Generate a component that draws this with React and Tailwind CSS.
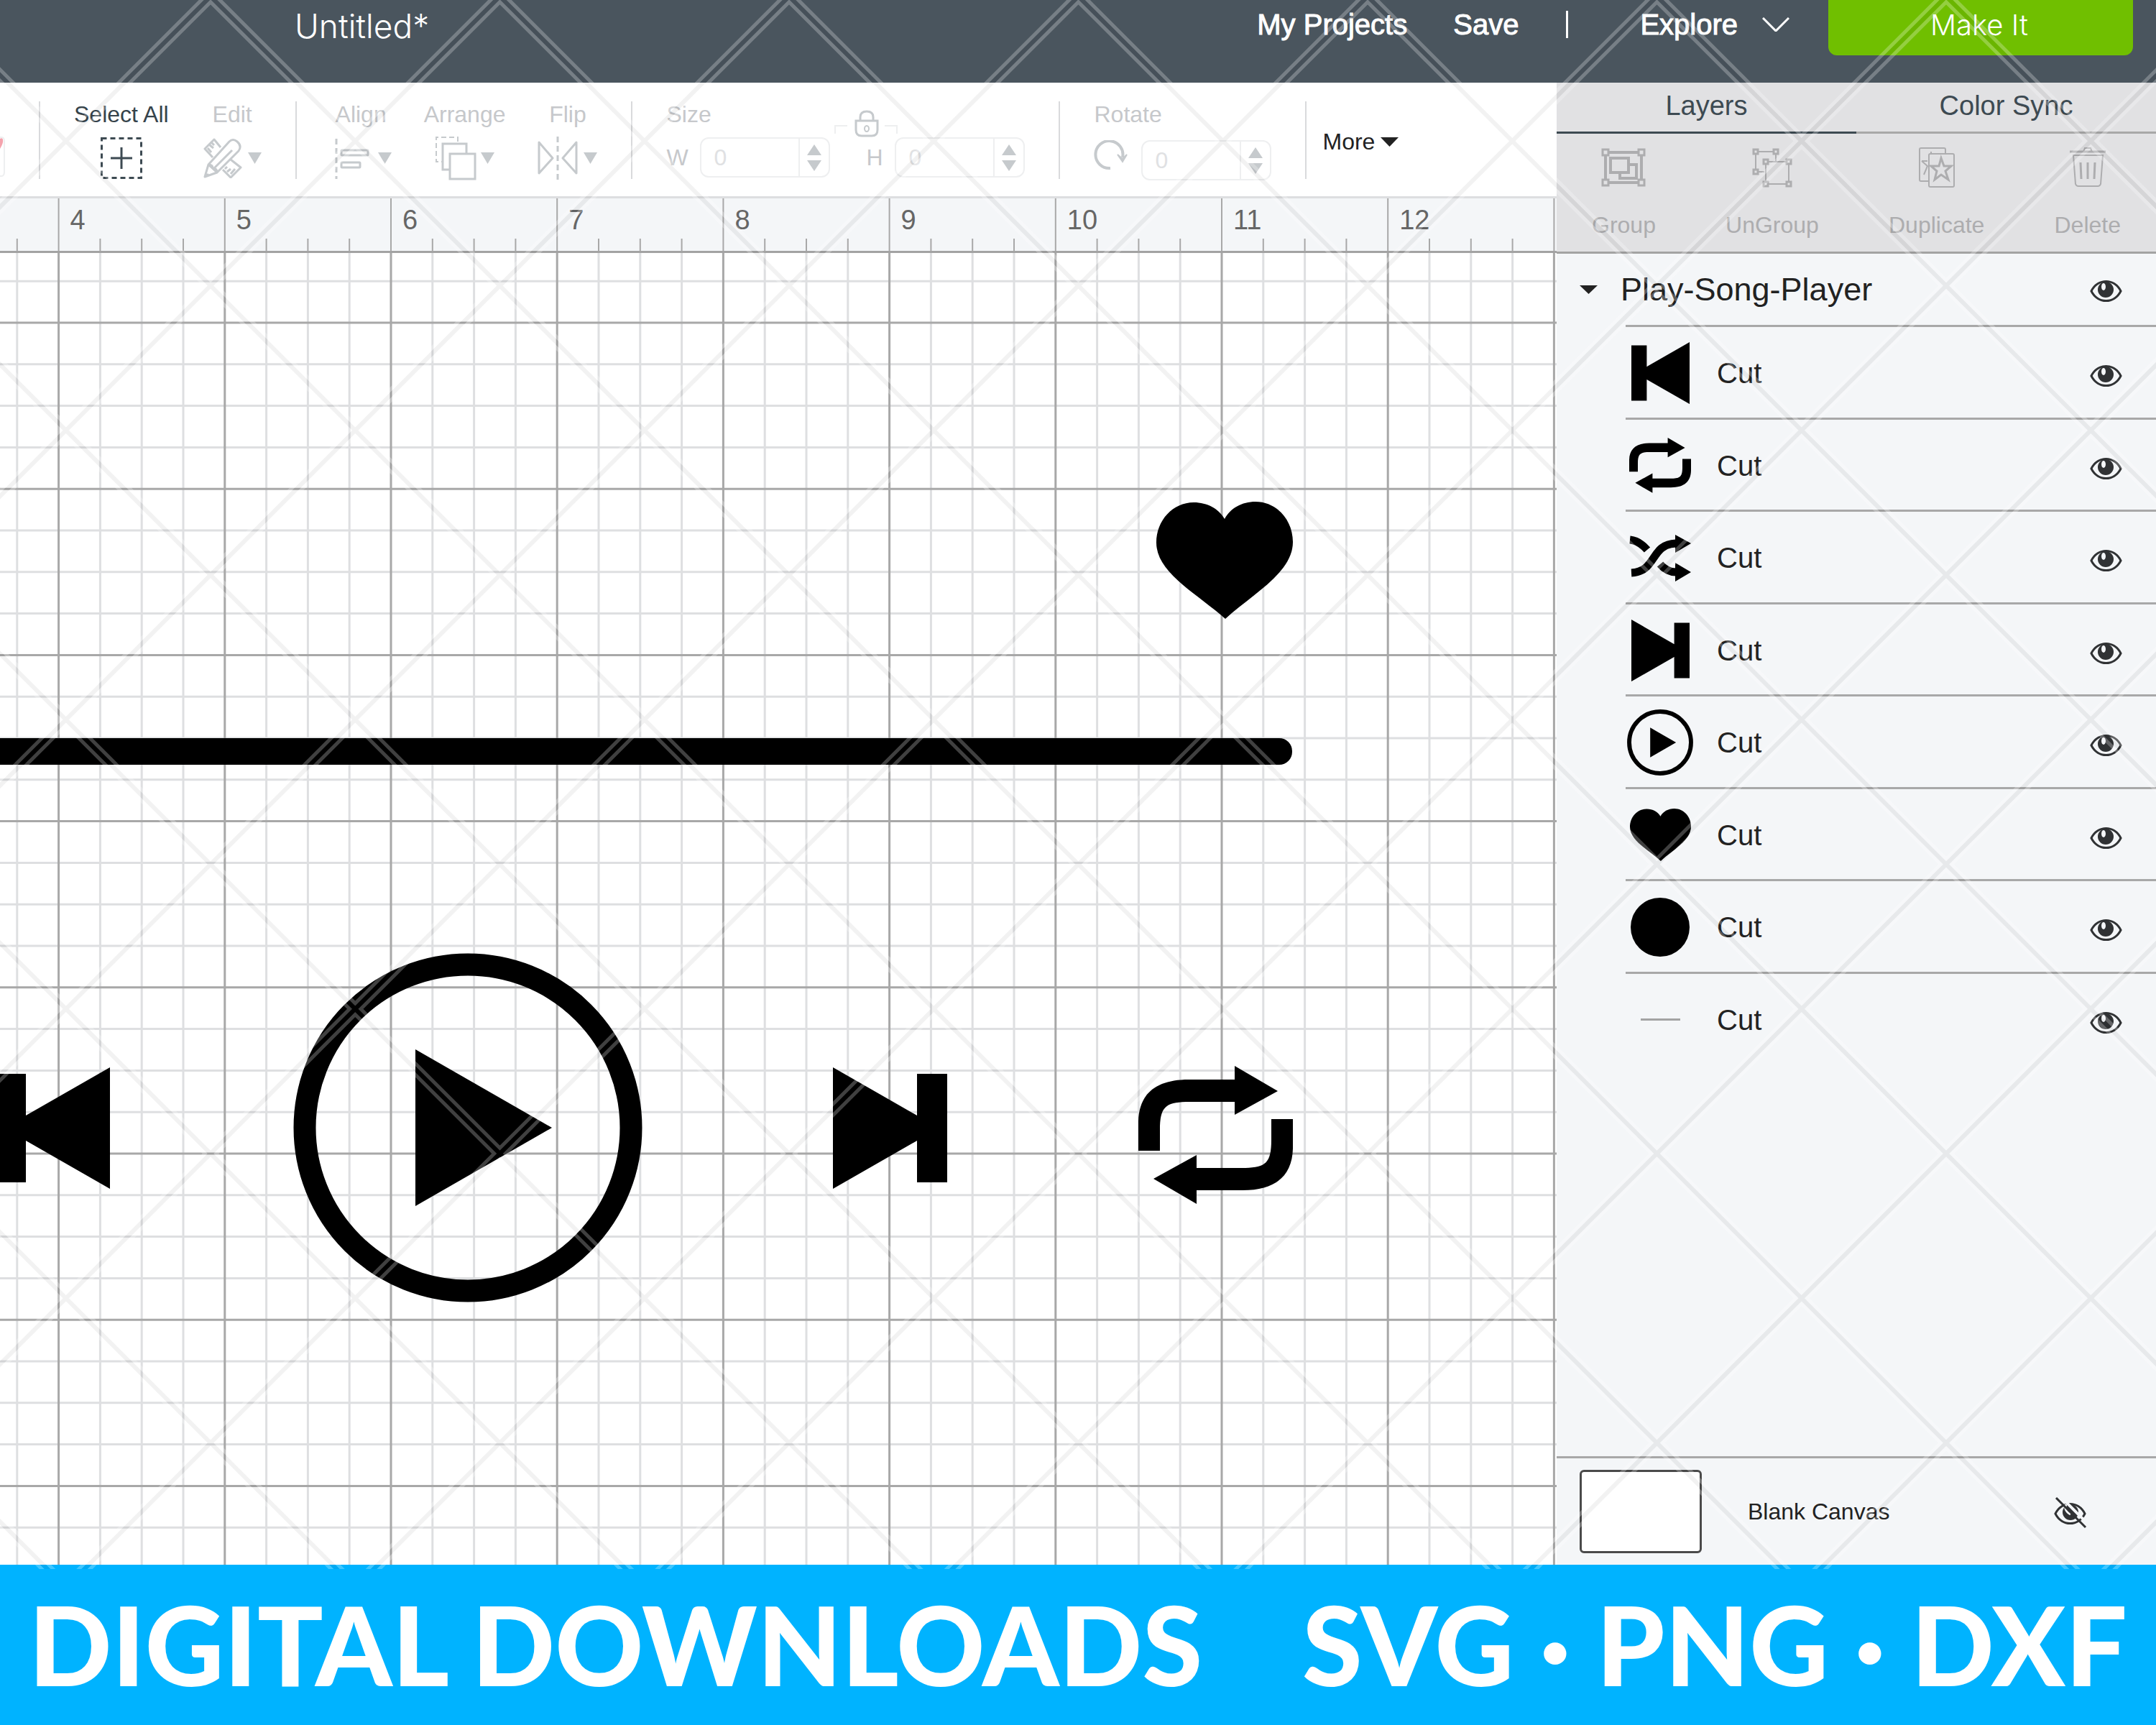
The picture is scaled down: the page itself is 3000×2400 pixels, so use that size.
import React, { useState } from 'react';

const SANS = "font-['Liberation_Sans',Arial,sans-serif]";

// Artwork, in canvas pixels. Layer thumbnails reuse it through a viewBox.
const HEART =
  'M1705 511 C1666 476 1609 447 1609 405 C1609 374 1632 349 1661 349 C1680 349 1696 358 1704 372 C1712 357 1728 348 1747 348 C1776 348 1799 373 1799 404 C1799 447 1743 476 1705 511 Z';
const PREVIOUS = 'M-6 1144 H36 V1202 L153 1135 V1304 L36 1237 V1295 H-6 Z';
const NEXT = 'M1318 1144 H1276 V1202 L1159 1135 V1304 L1276 1237 V1295 H1318 Z';
const REPEAT_HALF =
  'M1584 1251 V1210 C1585 1172 1608 1152 1654 1152 H1718 V1133 L1778 1168 L1718 1201 V1183 H1650 C1622 1184 1614 1190 1614 1222 V1251 Z';

const Repeat = () => (
  <>
    <path d={REPEAT_HALF} />
    <path d={REPEAT_HALF} transform="rotate(180 1691.5 1229)" />
  </>
);

const PlayRing = () => (
  <>
    <circle cx="651" cy="1219" r="227" fill="none" stroke="black" strokeWidth="31" />
    <path d="M578 1110 L768 1219 L578 1328 Z" />
  </>
);

const Shuffle = () => (
  <>
    <g fill="none" stroke="black" strokeWidth="11">
      <path d="M1 7 C11 8 18 13 25 21" />
      <path d="M3 53 C39 51 29 13 65 12" />
      <path d="M43 41 C49 48 56 52 65 52" />
    </g>
    <path d="M64 0 L86 12 L64 25 Z M64 39 L86 52 L64 65 Z" />
  </>
);

const layers = [
  { id: 'previous', size: 'w-[81px]', viewBox: '-6 1135 159 169', art: <path d={PREVIOUS} /> },
  { id: 'repeat', size: 'w-[86px]', viewBox: '1584 1133 215 192', art: <Repeat /> },
  { id: 'shuffle', size: 'w-[86px]', viewBox: '0 0 86 65', art: <Shuffle /> },
  { id: 'next', size: 'w-[81px]', viewBox: '1159 1135 159 169', art: <path d={NEXT} /> },
  { id: 'play', size: 'w-[92px]', viewBox: '408 976 486 486', art: <PlayRing /> },
  { id: 'heart', size: 'w-[85px]', viewBox: '1609 348 190 163', art: <path d={HEART} /> },
  { id: 'dot', size: 'w-[82px]', viewBox: '0 0 82 82', art: <circle cx="41" cy="41" r="41" /> },
  { id: 'line', size: 'w-[55px]', viewBox: '0 0 55 3', art: <rect width="55" height="3" fill="#a3a3a3" /> },
];

const Eye = () => (
  <svg className="w-[45px] h-[30px]" viewBox="0 0 45 30">
    <path d="M2 15 C11 -3 34 -3 43 15 C34 33 11 33 2 15 Z" fill="none" stroke="#303234" strokeWidth="3" />
    <circle cx="22" cy="13" r="11" fill="#303234" />
    <ellipse cx="19" cy="9" rx="3" ry="5" fill="#f4f6f8" />
  </svg>
);

const EyeOff = () => (
  <svg className="w-[46px] h-[44px]" viewBox="0 0 46 44" fill="none" stroke="#303234">
    <path d="M2 23 C11 5 34 5 43 23 C34 41 11 41 2 23 Z" strokeWidth="3" />
    <circle cx="23" cy="21" r="11" fill="#303234" stroke="none" />
    <path d="M17 10 C14 15 17 21 23 24" stroke="#f4f6f8" strokeWidth="3" />
    <path d="M8 -2 L48 38" stroke="#f4f6f8" strokeWidth="4" />
    <path d="M3 1 L44 42" strokeWidth="3" />
  </svg>
);

const Caret = () => (
  <svg className="w-[19px] h-4" viewBox="0 0 19 16" fill="#c6cacd">
    <path d="M0 0 H19 L9.500 16 Z" />
  </svg>
);

const Separator = () => <div className="w-[2px] h-[108px] shrink-0 bg-[#d9dadc]" />;

const Tool = ({ label, children, active }) => (
  <button
    className={`flex flex-col items-center shrink-0 text-[32px] leading-9 ${
      active ? 'text-[#36434b]' : 'text-[#c6c8cb]'
    }`}
  >
    <span className="h-[50px]">{label}</span>
    <span className="h-[58px] flex items-center">{children}</span>
  </button>
);

const NumberField = ({ id, label }) => (
  <div className="w-[181px] h-[56px] flex shrink-0 border-2 border-[#eeeff0] rounded-xl overflow-hidden">
    <input
      id={id}
      aria-label={label}
      defaultValue="0"
      className="min-w-0 flex-1 pl-[17px] text-[32px] leading-9 text-[#e0e1e3] bg-transparent outline-none"
    />
    <div className="w-[42px] flex flex-col items-center justify-center gap-[7px] border-l-2 border-[#eeeff0]">
      <button aria-label={`Increase ${label}`}>
        <svg className="w-5 h-[15px]" viewBox="0 0 20 15" fill="#c6cacd"><path d="M0 15 L10 0 L20 15 Z" /></svg>
      </button>
      <button aria-label={`Decrease ${label}`}>
        <svg className="w-5 h-[15px]" viewBox="0 0 20 15" fill="#c6cacd"><path d="M0 0 L10 15 L20 0 Z" /></svg>
      </button>
    </div>
  </div>
);

const Header = () => (
  <header className="h-[115px] flex items-start bg-[#4a555e] text-white text-[40px] leading-10">
    <h1 className="mt-[12px] ml-[410px] mr-auto font-['Inter',sans-serif] font-light text-[46px] leading-[48px]">Untitled*</h1>
    <nav className="mt-[14px] flex items-center [-webkit-text-stroke:1px_currentColor]">
      <a href="#projects">My Projects</a>
      <a href="#save" className="ml-[64px]">Save</a>
      <span className="ml-[66px] w-[3px] h-[38px] bg-white" />
      <button className="ml-[100px] flex items-center gap-[34px]">
        Explore
        <svg className="w-[38px] h-[20px]" viewBox="0 0 38 20" fill="none" stroke="white" strokeWidth="3">
          <path d="M1 1 L19 19 L37 1" />
        </svg>
      </button>
    </nav>
    <button className="ml-[54px] mr-8 w-[424px] h-[77px] pr-1 pb-2 rounded-b-xl bg-[#70bf00] font-['Inter',sans-serif] font-light text-[40px]">
      Make It
    </button>
  </header>
);

const Toolbar = () => (
  <div className="h-[158px] pt-[26px] flex items-start gap-[47px] overflow-hidden">
    <svg className="w-[7px] h-[108px] shrink-0" viewBox="0 0 7 108" fill="none">
      <path d="M-8 50 H2 Q6 50 6 56 V98 Q6 104 2 104 H-8" stroke="#eeeff0" strokeWidth="2" />
      <path d="M0 66 V52 Q3 50 4 53 Q5 58 0 66 Z" fill="#f4a3ad" />
    </svg>
    <Separator />
    <div className="flex gap-12">
      <Tool label="Select All" active>
        <svg className="w-[58px] h-[58px]" viewBox="0 0 58 58" fill="none" stroke="#3d4a52" strokeWidth="3">
          <rect x="1.500" y="1.500" width="55" height="55" strokeDasharray="7 5" />
          <path d="M29 14 V44 M14 29 H44" />
        </svg>
      </Tool>
      <Tool label="Edit">
        <svg className="w-[54px] h-[56px] mr-2" viewBox="0 0 54 56" fill="none" stroke="#c6cacd" strokeWidth="3" strokeLinejoin="round">
          <path d="M24 13 L15 2 L2 15 L13 27 M9 10 L14 14 M6 14 L11 20 M12 7 L15 10" />
          <path d="M38 30 L52 41 L38 55 L27 44 M33 47 L38 43 M38 50 L44 43 M30 43 L33 40" />
          <path d="M2 54 L7 37 L36 5 Q41 0 47 5 Q54 11 49 18 L19 48 Z M7 37 L19 48 M2 54 L7 52 L5 50 M15 42 L40 17 M7 37 Q13 37 13 42 Q19 42 19 48" />
        </svg>
        <Caret />
      </Tool>
    </div>
    <Separator />
    <div className="flex gap-[45px]">
      <Tool label="Align">
        <svg className="w-[54px] h-[58px] mr-3" viewBox="0 0 54 58" fill="none" stroke="#c6cacd" strokeWidth="3">
          <path d="M8 2 V58" strokeDasharray="8 5" />
          <rect x="15" y="18" width="37" height="7" rx="1" />
          <rect x="15" y="35" width="26" height="7" rx="1" />
        </svg>
        <Caret />
      </Tool>
      <Tool label="Arrange">
        <svg className="w-[58px] h-[62px] mr-1.5" viewBox="0 0 58 62" fill="none" stroke="#c6cacd" strokeWidth="3">
          <path d="M32 8 V2 H2 V36 H10" strokeDasharray="7 4" strokeWidth="2" />
          <path d="M20 47 H11 V11 H44 V24" />
          <rect x="21" y="25" width="35" height="35" />
        </svg>
        <Caret />
      </Tool>
      <Tool label="Flip">
        <svg className="w-[56px] h-[62px] mr-2" viewBox="0 0 56 62" fill="none" stroke="#c6cacd" strokeWidth="3" strokeLinejoin="round">
          <path d="M2 9 L21 31 L2 52 Z M54 9 L35 31 L54 52 Z" />
          <path d="M28 1 V62" strokeDasharray="8 5" />
        </svg>
        <Caret />
      </Tool>
    </div>
    <Separator />
    <div className="shrink-0 text-[32px] leading-9 text-[#c6c8cb]">
      <div className="h-[50px] flex items-start">
        <span className="w-[234px]">Size</span>
        <button aria-label="Lock proportions" className="mt-3">
          <svg className="w-[88px] h-[38px]" viewBox="0 0 88 38" fill="none" stroke="#c6cacd" strokeWidth="3">
            <path d="M1 33 V22 H18 M70 22 H87 V33" stroke="#eeeff0" strokeWidth="2" />
            <path d="M36 15 V10 Q36 2 45 2 Q54 2 54 10 V15" />
            <path d="M30 15 H60 V28 Q60 36 52 36 H38 Q30 36 30 28 Z" />
            <ellipse cx="45" cy="26" rx="3" ry="4" strokeWidth="2" />
          </svg>
        </button>
      </div>
      <div className="h-[56px] flex items-center">
        <label htmlFor="size-w" className="w-[47px]">W</label>
        <NumberField id="size-w" label="width" />
        <label htmlFor="size-h" className="w-[90px] pl-[50px]">H</label>
        <NumberField id="size-h" label="height" />
      </div>
    </div>
    <Separator />
    <div className="shrink-0 text-[32px] leading-9 text-[#c6c8cb]">
      <label htmlFor="rotate" className="block h-[54px]">Rotate</label>
      <div className="flex items-start gap-[19px]">
        <svg className="w-[47px] h-[43px]" viewBox="0 0 47 43" fill="none" stroke="#c6cacd" strokeWidth="4">
          <path d="M23 39 A19 19 0 1 1 40 24" />
          <path d="M33 20 L40 26 L46 20 L40 30 Z" strokeWidth="2" fill="#c6cacd" />
        </svg>
        <NumberField id="rotate" label="rotation" />
      </div>
    </div>
    <div className="flex gap-[22px]">
      <Separator />
      <button className="h-[112px] flex items-center gap-2 text-[32px] leading-9 text-[#222]">
        More
        <svg className="w-[25px] h-[13px]" viewBox="0 0 25 13" fill="#222"><path d="M0 0 H25 L12.500 13 Z" /></svg>
      </button>
    </div>
  </div>
);

// One inch on the mat is 231.2px; the inch marked 4 sits at x = 81.6.
const INCH = 231.2;
const inchX = (n) => 81.6 + (n - 4) * INCH;
const range = (n) => Array.from({ length: n }, (_, i) => i);

const Ruler = () => (
  <svg className="block w-full h-[79px] bg-[#f4f6f8]">
    <rect width="100%" height="3" fill="#dddee0" />
    {range(48).map((i) => {
      const x = inchX(3 + i / 4);
      return <path key={i} d={`M${x} ${i % 4 ? 59 : 3} V79`} stroke="#a8a8a8" strokeWidth="2" />;
    })}
    {range(9).map((i) => (
      <text key={i} x={inchX(i + 4) + 16} y="46" fill="#666" fontSize="38">{i + 4}</text>
    ))}
    <rect y="76" width="100%" height="3" fill="#a3a3a3" />
  </svg>
);

const Canvas = () => {
  const top = 97 - INCH;
  return (
    <div className="flex-1 min-h-0 overflow-hidden bg-white">
      <svg className="block w-full h-full">
        <g fill="none" strokeWidth="3">
          {range(48).filter((i) => i % 4).map((i) => (
            <path key={i} d={`M${inchX(3 + i / 4)} 0 V3000 M0 ${top + (i * INCH) / 4} H3000`} stroke="#dedfe1" />
          ))}
          {range(12).map((i) => (
            <path key={i} d={`M${inchX(3 + i)} 0 V3000 M0 ${top + i * INCH} H3000`} stroke="#a8a8a8" />
          ))}
        </g>
        <g transform="translate(0 -2)">
          <path d={HEART} />
          <rect x="-40" y="677" width="1838" height="37" rx="18" />
          <path d={PREVIOUS} />
          <PlayRing />
          <path d={NEXT} />
          <Repeat />
        </g>
      </svg>
    </div>
  );
};

const actions = [
  {
    label: 'Group',
    icon: (
      <svg className="w-[62px] h-14" viewBox="0 0 62 56" fill="none" stroke="#adadaf" strokeWidth="3">
        <path d="M10 7 H52 M10 49 H52 M6 11 V45 M56 11 V45" strokeWidth="4" />
        <path d="M2 3 H10 V11 H2 Z M52 3 H60 V11 H52 Z M2 45 H10 V53 H2 Z M52 45 H60 V53 H52 Z" />
        <path d="M13 15 H38 V35 H13 Z M38 24 H49 V43 H26 V35" strokeWidth="4" />
      </svg>
    ),
  },
  {
    label: 'UnGroup',
    icon: (
      <svg className="w-[56px] h-14" viewBox="0 0 56 56" fill="none" stroke="#adadaf" strokeWidth="2">
        <path d="M8 6 H30 M5 9 V31 M8 34 H17 M33 9 V20 M22 20 H48 M19 23 V48 M51 23 V48 M22 51 H48" />
        <path d="M2 3 H8 V9 H2 Z M30 3 H36 V9 H30 Z M2 31 H8 V37 H2 Z M16 17 H22 V23 H16 Z M48 17 H54 V23 H48 Z M16 48 H22 V54 H16 Z M48 48 H54 V54 H48 Z" strokeWidth="3" />
      </svg>
    ),
  },
  {
    label: 'Duplicate',
    icon: (
      <svg className="w-[52px] h-14" viewBox="0 0 52 56" fill="none" stroke="#adadaf" strokeWidth="2">
        <path d="M14 47 H4 Q2 47 2 45 V3 Q2 1 4 1 H36 Q38 1 38 3 V9" />
        <path d="M5 19 L13 26 L8 38 M5 19 H13 M18 6 V9" />
        <rect x="15" y="9" width="35" height="46" rx="2" />
        <path d="M32 15 L36 26 H46 L38 33 L42 45 L32 38 L23 45 L26 33 L18 26 H29 Z" strokeWidth="3" />
      </svg>
    ),
  },
  {
    label: 'Delete',
    icon: (
      <svg className="w-[50px] h-14" viewBox="0 0 50 56" fill="none" stroke="#adadaf" strokeWidth="2">
        <path d="M0 6 H50" strokeWidth="3" />
        <path d="M19 6 L21 1 H29 L31 6 M5 11 H46 L43 51 Q42 54 39 54 H12 Q9 54 8 51 Z" />
        <path d="M15 21 L16 44 M25 21 V44 M35 21 L34 44" strokeWidth="3" />
      </svg>
    ),
  },
];

const LayersPanel = () => {
  const [tab, setTab] = useState('Layers');

  return (
    <aside className="w-[834px] shrink-0 flex flex-col bg-[#f4f6f8] text-[#222]">
      <div className="bg-[#e1e1e3] border-b-3 border-[#a3a3a3]">
        <div className="flex h-[71px]">
          {['Layers', 'Color Sync'].map((name) => (
            <button
              key={name}
              onClick={() => setTab(name)}
              className={`flex-1 pb-[5px] border-b-3 text-[38px] leading-10 text-[#3d4a52] ${
                tab === name ? 'border-[#3d4a52]' : 'border-[#a8a8a8]'
              }`}
            >
              {name}
            </button>
          ))}
        </div>
        <div className="flex justify-between px-[49px] pt-[19px] pb-[19px]">
          {actions.map(({ label, icon }) => (
            <button key={label} className="flex flex-col items-center gap-[34px] text-[32px] leading-9 text-[#adadaf]">
              {icon}
              {label}
            </button>
          ))}
        </div>
      </div>

      <div className="h-[99px] shrink-0 flex items-center pl-8 pr-[47px]">
        <button aria-label="Collapse group" className="mr-[32px]">
          <svg className="w-[25px] h-3" viewBox="0 0 25 12" fill="#222"><path d="M0 0 H25 L12.500 12 Z" /></svg>
        </button>
        <h2 className="mr-auto text-[45px] leading-[50px]">Play-Song-Player</h2>
        <button aria-label="Hide group" className="pt-1"><Eye /></button>
      </div>

      <ul className="ml-[96px] h-[1028px] shrink-0 grid grid-rows-8">
        {layers.map(({ id, size, viewBox, art }) => (
          <li key={id} className="flex items-center border-t-3 border-[#a8a8a8] pt-[3px] pr-[47px]">
            <span className="w-[96px] flex justify-center">
              <svg className={size} viewBox={viewBox}>{art}</svg>
            </span>
            <span className="ml-[31px] mr-auto text-[40px] leading-10">Cut</span>
            <button aria-label={`Hide ${id}`} className="pt-2"><Eye /></button>
          </li>
        ))}
      </ul>

      <div className="mt-auto h-[151px] shrink-0 flex items-center border-t-3 border-[#a8a8a8] pl-8 pr-[96px]">
        <div className="w-[170px] h-[116px] rounded-md border-3 border-[#4a4a4a] bg-white" />
        <span className="ml-[64px] mr-auto text-[32px] leading-9">Blank Canvas</span>
        <button aria-label="Show canvas" className="pt-1"><EyeOff /></button>
      </div>
    </aside>
  );
};

// Diagonal lattice laid over the whole editor: two pale rails with a faint dark core.
const Lattice = () => {
  const d = range(20)
    .map((i) => 293 + 402.5 * (i - 7))
    .map((x) => `M${x} -5 l2400 2400 M${x} -5 l-2400 2400`)
    .join(' ');

  return (
    <svg className="absolute left-0 top-0 w-full h-[calc(100%+6px)] pointer-events-none" fill="none">
      <mask id="rails" maskUnits="userSpaceOnUse" x="0" y="0" width="100%" height="100%">
        <path d={d} stroke="white" strokeWidth="16" />
        <path d={d} stroke="black" strokeWidth="6" />
      </mask>
      <rect width="100%" height="100%" fill="white" fillOpacity="0.25" mask="url(#rails)" />
      <path d={d} stroke="black" strokeOpacity="0.05" strokeWidth="6" />
    </svg>
  );
};

const App = () => (
  <div className={`min-h-screen flex flex-col overflow-hidden bg-white ${SANS}`}>
    <div className="relative z-10 flex-1 flex flex-col">
      <Header />
      <div className="flex-1 flex">
        <main className="flex-1 min-w-0 flex flex-col">
          <Toolbar />
          <Ruler />
          <Canvas />
        </main>
        <LayersPanel />
      </div>
      <Lattice />
    </div>
    <footer className="h-[223px] px-[40px] pb-1 flex items-center justify-between bg-[#00b3ff] text-white font-['Lato',sans-serif] font-black text-[152px] leading-none whitespace-nowrap">
      <span>DIGITAL DOWNLOADS</span>
      <span>SVG · PNG · DXF</span>
    </footer>
  </div>
);

export default App;
